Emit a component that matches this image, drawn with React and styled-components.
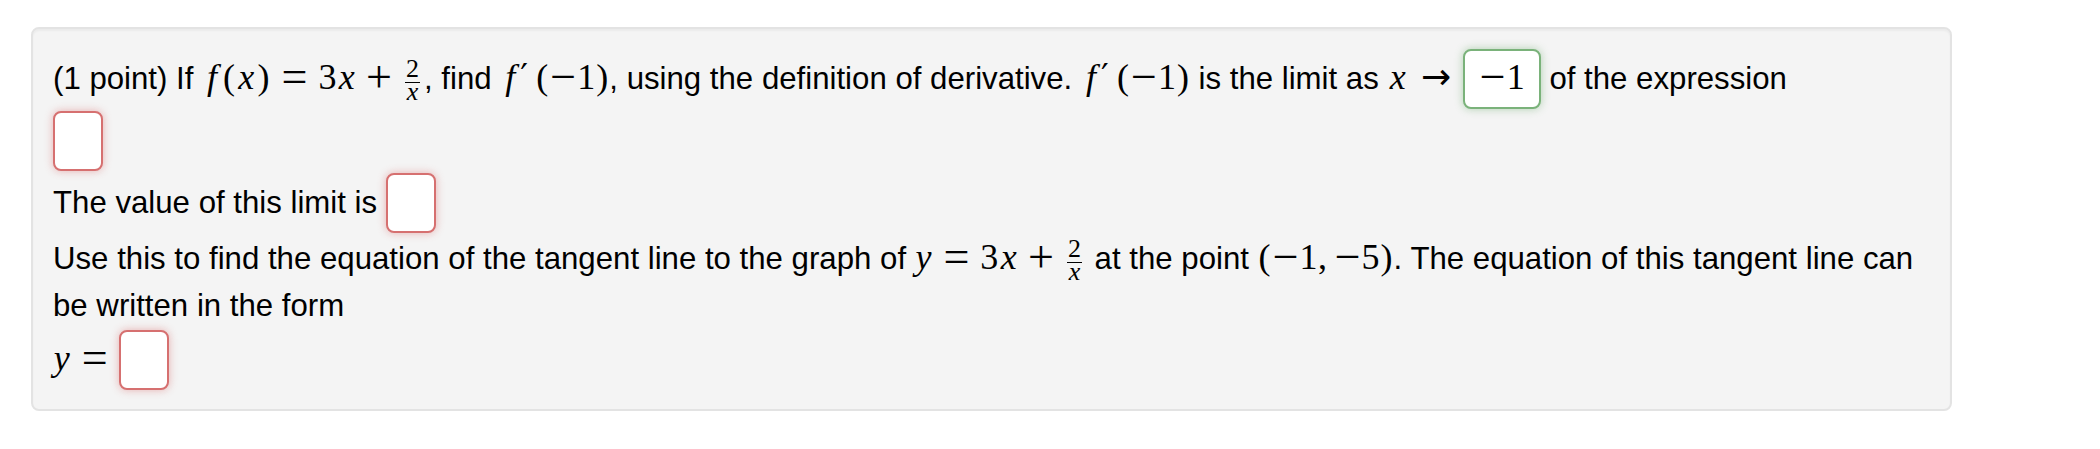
import React from 'react'
import styled, { createGlobalStyle } from 'styled-components'

// math em used by the rendered formulas (TeX widths scaled to this)
const EM = 36

const GlobalStyle = createGlobalStyle`
  html, body {
    margin: 0;
    padding: 0;
    background: #fff;
  }
  body {
    font-family: "Liberation Sans", Arial, sans-serif;
  }
`

const Page = styled.div`
  padding: 27px 0 0 31px;
`

const Problem = styled.div`
  box-sizing: border-box;
  width: 1921px;
  padding: 19px 20px 18px;
  background: #f4f4f4;
  border: 2px solid #e3e3e3;
  border-radius: 8px;
  box-shadow: inset 0 2px 2px rgba(0, 0, 0, 0.04);
  color: #000;
  font-size: 31.2px;
  line-height: 47px;
`

const Line = styled.div`
  white-space: nowrap;
`

const AnswerBox = styled.span`
  display: inline-block;
  box-sizing: border-box;
  min-width: 50px;
  height: 60px;
  margin: 1px 0;
  padding: 0 ${p => (p.$filled ? '14px' : '0')};
  line-height: 56px;
  text-align: center;
  background: #fff;
  border: 2px solid ${p => (p.$correct ? '#7ab27a' : '#d67070')};
  border-radius: 8px;
  box-shadow: 0 0 9px ${p => (p.$correct ? 'rgba(95, 165, 95, 0.45)' : 'rgba(215, 95, 95, 0.45)')};
`

const Formula = styled.span`
  font-family: "Liberation Serif", "DejaVu Serif", serif;
  font-size: ${EM}px;
  line-height: 1;
  white-space: nowrap;
`

const Sym = styled.span`
  display: inline-block;
  width: ${p => p.$w}px;
  text-align: ${p => p.$align || 'center'};
  font-style: ${p => (p.$it ? 'italic' : 'normal')};
`

// binary / relation operators: drawn a little larger to match TeX glyphs
const Op = styled.span`
  display: inline-block;
  width: 28px;
  margin: 0 ${p => p.$space}px;
  text-align: center;
  font-size: 46px;
  vertical-align: -3px;
`

const Prime = styled.span`
  display: inline-block;
  width: 15px;
  font-family: "DejaVu Sans", sans-serif;
  font-size: 34px;
  text-align: left;
  vertical-align: 1px;
`

const Frac = styled.span`
  display: inline-flex;
  flex-direction: column;
  align-items: center;
  margin: 0 4px;
  font-size: 26px;
  line-height: 1;
  vertical-align: 12px;
`

const Num = styled.span`
  padding: 0 1px;
`

const Den = styled.span`
  align-self: stretch;
  text-align: center;
  border-top: 1.6px solid #000;
  font-style: italic;
  line-height: 0.62;
  padding-top: 1px;
`

const Arrow = styled.span`
  display: inline-block;
  width: 36px;
  margin-left: 10px;
  font-family: "DejaVu Sans", sans-serif;
  font-size: 36px;
  text-align: center;
`

const F = () => <Sym $w={0.55 * EM} $it>f</Sym>
const X = () => <Sym $w={0.572 * EM} $it>x</Sym>
const Y = () => <Sym $w={0.49 * EM} $it>y</Sym>
const Paren = ({ children }) => <Sym $w={0.389 * EM}>{children}</Sym>
const Digit = ({ children }) => <Sym $w={0.5 * EM}>{children}</Sym>
const Minus = () => <Op $space={0}>−</Op>

const TwoOverX = () => (
  <Frac>
    <Num>2</Num>
    <Den>x</Den>
  </Frac>
)

// 3x + 2/x
const RightSide = () => (
  <>
    <Digit>3</Digit><X />
    <Op $space={8}>+</Op>
    <TwoOverX />
  </>
)

const FPrimeAtMinusOne = () => (
  <Formula>
    <Sym $w={20} $it>f</Sym><Prime>′</Prime>
    <Paren>(</Paren><Minus /><Digit>1</Digit><Paren>)</Paren>
  </Formula>
)

export default function App () {
  return (
    <Page>
      <GlobalStyle />
      <Problem>
        <Line>
          (1 point) If{' '}
          <Formula>
            <F /><Paren>(</Paren><X /><Paren>)</Paren>
            <Op $space={10}>=</Op>
            <RightSide />
          </Formula>
          , find <FPrimeAtMinusOne />, using the definition of derivative.{' '}
          <FPrimeAtMinusOne /> is the limit as{' '}
          <Formula>
            <X /><Arrow>→</Arrow>
          </Formula>{' '}
          <AnswerBox $correct $filled>
            <Formula><Minus /><Digit>1</Digit></Formula>
          </AnswerBox>{' '}
          of the expression
        </Line>
        <Line>
          <AnswerBox>{'\u200b'}</AnswerBox>
        </Line>
        <Line>
          The value of this limit is <AnswerBox>{'\u200b'}</AnswerBox>
        </Line>
        <Line>
          Use this to find the equation of the tangent line to the graph of{' '}
          <Formula>
            <Y /><Op $space={10}>=</Op><RightSide />
          </Formula>{' '}
          at the point{' '}
          <Formula>
            <Paren>(</Paren><Minus /><Digit>1</Digit>
            <Sym $w={0.278 * EM}>,</Sym><Sym $w={6} />
            <Minus /><Digit>5</Digit><Paren>)</Paren>
          </Formula>
          . The equation of this tangent line can
        </Line>
        <Line>be written in the form</Line>
        <Line>
          <Formula>
            <Y /><Op $space={10}>=</Op>
          </Formula>
          <AnswerBox>{'\u200b'}</AnswerBox>
        </Line>
      </Problem>
    </Page>
  )
}
